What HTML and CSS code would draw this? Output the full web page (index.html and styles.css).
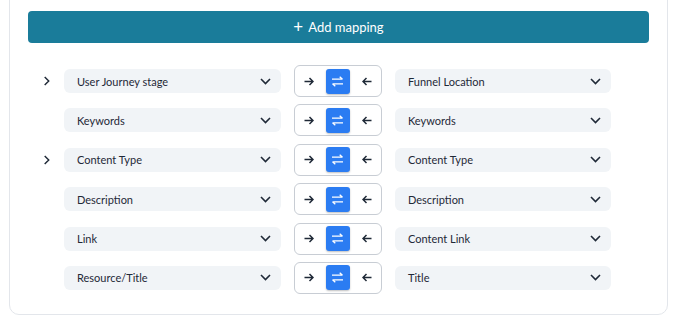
FILE: index.html
```html
<!DOCTYPE html>
<html>
<head>
<meta charset="utf-8">
<link rel="stylesheet" href="styles.css">
</head>
<body>
<div class="card">
  <button class="add-btn"><span class="plus">+</span> Add mapping</button>
  <div class="rows">
    <div class="row">
      <span class="expander"><svg width="10" height="12" viewBox="0 0 10 12"><path d="M3 1.5 L7.5 6 L3 10.5" fill="none" stroke="#1f2937" stroke-width="1.6"/></svg></span>
      <div class="select"><span>User Journey stage</span><svg class="chev" width="11" height="7" viewBox="0 0 11 7"><path d="M1 1 L5.5 5.5 L10 1" fill="none" stroke="#1f2937" stroke-width="1.6"/></svg></div>
      <div class="toggle"><span class="dir"><svg width="10" height="9" viewBox="0 0 10 9"><path d="M0.5 4.5 H9 M5.5 1 L9 4.5 L5.5 8" fill="none" stroke="#1f2937" stroke-width="1.5"/></svg></span><span class="both"><svg width="13" height="11" viewBox="0 0 13 11"><path d="M1 3.2 H11.5 M8.7 0.7 L11.5 3.2 M12 7.8 H1.5 M4.3 10.3 L1.5 7.8" fill="none" stroke="#fff" stroke-width="1.3"/></svg></span><span class="dir"><svg width="10" height="9" viewBox="0 0 10 9"><path d="M9.5 4.5 H1 M4.5 1 L1 4.5 L4.5 8" fill="none" stroke="#1f2937" stroke-width="1.5"/></svg></span></div>
      <div class="select"><span>Funnel Location</span><svg class="chev" width="11" height="7" viewBox="0 0 11 7"><path d="M1 1 L5.5 5.5 L10 1" fill="none" stroke="#1f2937" stroke-width="1.6"/></svg></div>
    </div>
    <div class="row">
      <span class="expander"></span>
      <div class="select"><span>Keywords</span><svg class="chev" width="11" height="7" viewBox="0 0 11 7"><path d="M1 1 L5.5 5.5 L10 1" fill="none" stroke="#1f2937" stroke-width="1.6"/></svg></div>
      <div class="toggle"><span class="dir"><svg width="10" height="9" viewBox="0 0 10 9"><path d="M0.5 4.5 H9 M5.5 1 L9 4.5 L5.5 8" fill="none" stroke="#1f2937" stroke-width="1.5"/></svg></span><span class="both"><svg width="13" height="11" viewBox="0 0 13 11"><path d="M1 3.2 H11.5 M8.7 0.7 L11.5 3.2 M12 7.8 H1.5 M4.3 10.3 L1.5 7.8" fill="none" stroke="#fff" stroke-width="1.3"/></svg></span><span class="dir"><svg width="10" height="9" viewBox="0 0 10 9"><path d="M9.5 4.5 H1 M4.5 1 L1 4.5 L4.5 8" fill="none" stroke="#1f2937" stroke-width="1.5"/></svg></span></div>
      <div class="select"><span>Keywords</span><svg class="chev" width="11" height="7" viewBox="0 0 11 7"><path d="M1 1 L5.5 5.5 L10 1" fill="none" stroke="#1f2937" stroke-width="1.6"/></svg></div>
    </div>
    <div class="row">
      <span class="expander"><svg width="10" height="12" viewBox="0 0 10 12"><path d="M3 1.5 L7.5 6 L3 10.5" fill="none" stroke="#1f2937" stroke-width="1.6"/></svg></span>
      <div class="select"><span>Content Type</span><svg class="chev" width="11" height="7" viewBox="0 0 11 7"><path d="M1 1 L5.5 5.5 L10 1" fill="none" stroke="#1f2937" stroke-width="1.6"/></svg></div>
      <div class="toggle"><span class="dir"><svg width="10" height="9" viewBox="0 0 10 9"><path d="M0.5 4.5 H9 M5.5 1 L9 4.5 L5.5 8" fill="none" stroke="#1f2937" stroke-width="1.5"/></svg></span><span class="both"><svg width="13" height="11" viewBox="0 0 13 11"><path d="M1 3.2 H11.5 M8.7 0.7 L11.5 3.2 M12 7.8 H1.5 M4.3 10.3 L1.5 7.8" fill="none" stroke="#fff" stroke-width="1.3"/></svg></span><span class="dir"><svg width="10" height="9" viewBox="0 0 10 9"><path d="M9.5 4.5 H1 M4.5 1 L1 4.5 L4.5 8" fill="none" stroke="#1f2937" stroke-width="1.5"/></svg></span></div>
      <div class="select"><span>Content Type</span><svg class="chev" width="11" height="7" viewBox="0 0 11 7"><path d="M1 1 L5.5 5.5 L10 1" fill="none" stroke="#1f2937" stroke-width="1.6"/></svg></div>
    </div>
    <div class="row">
      <span class="expander"></span>
      <div class="select"><span>Description</span><svg class="chev" width="11" height="7" viewBox="0 0 11 7"><path d="M1 1 L5.5 5.5 L10 1" fill="none" stroke="#1f2937" stroke-width="1.6"/></svg></div>
      <div class="toggle"><span class="dir"><svg width="10" height="9" viewBox="0 0 10 9"><path d="M0.5 4.5 H9 M5.5 1 L9 4.5 L5.5 8" fill="none" stroke="#1f2937" stroke-width="1.5"/></svg></span><span class="both"><svg width="13" height="11" viewBox="0 0 13 11"><path d="M1 3.2 H11.5 M8.7 0.7 L11.5 3.2 M12 7.8 H1.5 M4.3 10.3 L1.5 7.8" fill="none" stroke="#fff" stroke-width="1.3"/></svg></span><span class="dir"><svg width="10" height="9" viewBox="0 0 10 9"><path d="M9.5 4.5 H1 M4.5 1 L1 4.5 L4.5 8" fill="none" stroke="#1f2937" stroke-width="1.5"/></svg></span></div>
      <div class="select"><span>Description</span><svg class="chev" width="11" height="7" viewBox="0 0 11 7"><path d="M1 1 L5.5 5.5 L10 1" fill="none" stroke="#1f2937" stroke-width="1.6"/></svg></div>
    </div>
    <div class="row">
      <span class="expander"></span>
      <div class="select"><span>Link</span><svg class="chev" width="11" height="7" viewBox="0 0 11 7"><path d="M1 1 L5.5 5.5 L10 1" fill="none" stroke="#1f2937" stroke-width="1.6"/></svg></div>
      <div class="toggle"><span class="dir"><svg width="10" height="9" viewBox="0 0 10 9"><path d="M0.5 4.5 H9 M5.5 1 L9 4.5 L5.5 8" fill="none" stroke="#1f2937" stroke-width="1.5"/></svg></span><span class="both"><svg width="13" height="11" viewBox="0 0 13 11"><path d="M1 3.2 H11.5 M8.7 0.7 L11.5 3.2 M12 7.8 H1.5 M4.3 10.3 L1.5 7.8" fill="none" stroke="#fff" stroke-width="1.3"/></svg></span><span class="dir"><svg width="10" height="9" viewBox="0 0 10 9"><path d="M9.5 4.5 H1 M4.5 1 L1 4.5 L4.5 8" fill="none" stroke="#1f2937" stroke-width="1.5"/></svg></span></div>
      <div class="select"><span>Content Link</span><svg class="chev" width="11" height="7" viewBox="0 0 11 7"><path d="M1 1 L5.5 5.5 L10 1" fill="none" stroke="#1f2937" stroke-width="1.6"/></svg></div>
    </div>
    <div class="row">
      <span class="expander"></span>
      <div class="select"><span>Resource/Title</span><svg class="chev" width="11" height="7" viewBox="0 0 11 7"><path d="M1 1 L5.5 5.5 L10 1" fill="none" stroke="#1f2937" stroke-width="1.6"/></svg></div>
      <div class="toggle"><span class="dir"><svg width="10" height="9" viewBox="0 0 10 9"><path d="M0.5 4.5 H9 M5.5 1 L9 4.5 L5.5 8" fill="none" stroke="#1f2937" stroke-width="1.5"/></svg></span><span class="both"><svg width="13" height="11" viewBox="0 0 13 11"><path d="M1 3.2 H11.5 M8.7 0.7 L11.5 3.2 M12 7.8 H1.5 M4.3 10.3 L1.5 7.8" fill="none" stroke="#fff" stroke-width="1.3"/></svg></span><span class="dir"><svg width="10" height="9" viewBox="0 0 10 9"><path d="M9.5 4.5 H1 M4.5 1 L1 4.5 L4.5 8" fill="none" stroke="#1f2937" stroke-width="1.5"/></svg></span></div>
      <div class="select"><span>Title</span><svg class="chev" width="11" height="7" viewBox="0 0 11 7"><path d="M1 1 L5.5 5.5 L10 1" fill="none" stroke="#1f2937" stroke-width="1.6"/></svg></div>
    </div>
  </div>
</div>
</body>
</html>
```

FILE: styles.css
```css
html, body {
  margin: 0;
  padding: 0;
  background: #ffffff;
}
body {
  font-family: Lato, "Liberation Sans", sans-serif;
  color: #1f2937;
  overflow: hidden;
}
.card {
  box-sizing: border-box;
  width: 659px;
  margin: -20px 0 0 9px;
  padding: 30px 18px 20px 18px;
  border: 1px solid #e3e6eb;
  border-radius: 10px;
  background: #fff;
}
.add-btn {
  display: flex;
  align-items: center;
  justify-content: center;
  gap: 5px;
  width: 100%;
  height: 32px;
  border: none;
  border-radius: 4px;
  background: #1a7c9a;
  color: #fff;
  font-family: Lato, "Liberation Sans", sans-serif;
  font-size: 13px;
  padding: 0;
}
.plus {
  font-size: 17px;
  line-height: 1;
  margin-top: -2px;
}
.rows {
  display: flex;
  flex-direction: column;
  gap: 7.4px;
  margin: 22px 0 0 12px;
}
.row {
  display: grid;
  grid-template-columns: 11px 217px 88px 216px;
  column-gap: 13px;
  align-items: center;
  height: 32px;
}
.expander {
  display: flex;
  align-items: center;
}
.expander svg {
  margin-left: 2px;
}
.select {
  box-sizing: border-box;
  height: 24px;
  display: flex;
  align-items: center;
  justify-content: space-between;
  padding: 0 10px 0 13px;
  background: #f1f4f7;
  border-radius: 6px;
  font-size: 11px;
  color: #1f2937;
}
.chev {
  display: block;
}
.toggle {
  box-sizing: border-box;
  height: 32px;
  border: 1px solid #c8cdd4;
  border-radius: 6px;
  background: #fff;
  display: grid;
  grid-template-columns: 1fr 1fr 1fr;
  align-items: center;
  justify-items: center;
}
.dir {
  display: flex;
  align-items: center;
  justify-content: center;
}
.both {
  width: 24px;
  height: 25px;
  border-radius: 3px;
  background: #2b7cf2;
  display: flex;
  align-items: center;
  justify-content: center;
  box-shadow: 0 1px 2px rgba(0,0,0,0.25);
}
```
